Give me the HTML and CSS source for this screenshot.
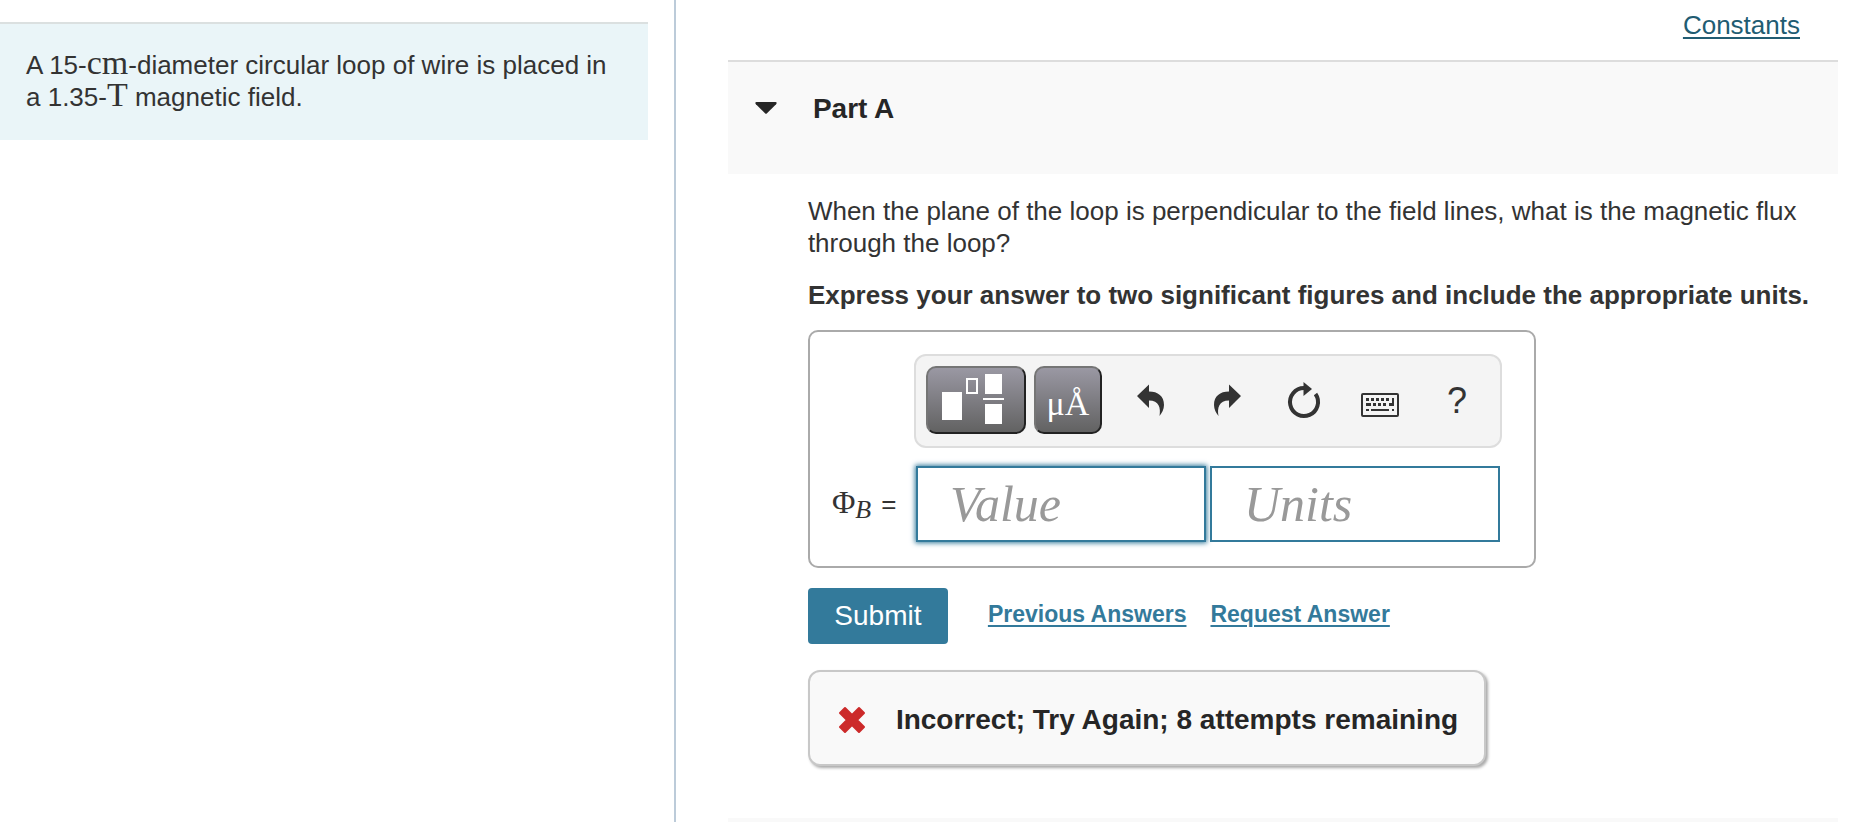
FILE: index.html
```html
<!DOCTYPE html>
<html lang="en">
<head>
    <meta charset="UTF-8">
    <title>Part A</title>
    <link rel="stylesheet" href="styles.css">
</head>
<body>
<div class="page">
    <aside class="problem-pane">
        <p class="intro">A 15-<span class="unit">cm</span>-diameter circular loop of wire is placed in a 1.35-<span class="unit">T</span> magnetic field.</p>
    </aside>

    <main class="work-pane">
        <div class="top-links">
            <a href="#constants">Constants</a>
        </div>

        <section>
            <header class="part-header">
                <svg class="caret" width="22" height="12" viewBox="0 0 22 12">
                    <path d="M1.5 0h19q2 0.4 0.6 2.2L12 11.3q-1 1-2 0L0.9 2.2Q-0.5 0.4 1.5 0z" fill="#262626"/>
                </svg>
                <h2>Part A</h2>
            </header>

            <div class="part-body">
                <p class="question">When the plane of the loop is perpendicular to the field lines, what is the magnetic flux through the loop?</p>
                <p class="instructions">Express your answer to two significant figures and include the appropriate units.</p>

                <form class="answer-form">
                    <div class="answer-box">
                        <div class="toolbar">
                            <button type="button" class="key key-wide" aria-label="Templates">
                                <svg width="62" height="50" viewBox="0 0 62 50" fill="#fff">
                                    <rect x="0" y="18" width="20" height="28"/>
                                    <rect x="25" y="5" width="10" height="14" fill="none" stroke="#fff" stroke-width="2"/>
                                    <rect x="43" y="0" width="17" height="20"/>
                                    <rect x="41" y="24" width="21" height="2"/>
                                    <rect x="43" y="30" width="17" height="20"/>
                                </svg>
                            </button>
                            <button type="button" class="key key-units">μÅ</button>
                            <div class="tools">
                                <button type="button" class="tool" aria-label="Undo">
                                    <svg width="38" height="38" viewBox="0 0 38 38" fill="#333">
                                        <path d="M5 14L17 2.5V9.5C26 9.5 32 14 32 23C32 27 30 31 27.5 34C29 26 27 18.5 17 18.5V26z"/>
                                    </svg>
                                </button>
                                <button type="button" class="tool" aria-label="Redo">
                                    <svg width="38" height="38" viewBox="0 0 38 38" fill="#333">
                                        <path d="M33 14L21 2.5V9.5C12 9.5 6 14 6 23C6 27 8 31 10.5 34C9 26 11 18.5 21 18.5V26z"/>
                                    </svg>
                                </button>
                                <button type="button" class="tool" aria-label="Reset">
                                    <svg width="38" height="38" viewBox="0 0 38 38">
                                        <path d="M19 6A14 14 0 1 0 30.5 12" fill="none" stroke="#333" stroke-width="4"/>
                                        <path d="M18.500 0L27 7L18.500 14z" fill="#333"/>
                                    </svg>
                                </button>
                                <button type="button" class="tool" aria-label="Keyboard">
                                    <svg width="38" height="38" viewBox="0 0 38 38" fill="#333">
                                        <rect x="1" y="12" width="36" height="22" rx="1" fill="none" stroke="#333" stroke-width="2"/>
                                        <path d="M5 16h3v3h-3zM10 16h3v3h-3zM15 16h3v3h-3zM20 16h3v3h-3zM25 16h3v3h-3z"/>
                                        <path d="M31 16h2v8h-5v-3h3zM5 21h5v3h-5zM12 21h3v3h-3zM17 21h3v3h-3zM22 21h3v3h-3z"/>
                                        <path d="M5 27h3v2h-3zM10 27h18v2h-18zM31 27h2v2h-2z"/>
                                    </svg>
                                </button>
                                <button type="button" class="tool tool-help" aria-label="Help">?</button>
                            </div>
                        </div>
                        <label class="answer-label" for="value"><span class="phi">Φ</span><span class="sub">B</span> <span>=</span></label>
                        <div class="fields">
                            <input class="field field-active" id="value" type="text" placeholder="Value">
                            <input class="field" id="units" type="text" placeholder="Units" aria-label="Units">
                        </div>
                    </div>

                    <div class="actions">
                        <button type="submit" class="submit">Submit</button>
                        <a href="#previous">Previous Answers</a>
                        <a href="#request">Request Answer</a>
                    </div>
                </form>

                <div class="feedback">
                    <svg width="28" height="28" viewBox="0 0 28 28">
                        <path d="M7 2L14 9L21 2L26 7L19 14L26 21L21 26L14 19L7 26L2 21L9 14L2 7z" fill="#cc2a2a" stroke="#cc2a2a" stroke-width="2" stroke-linejoin="round"/>
                    </svg>
                    <span>Incorrect; Try Again; 8 attempts remaining</span>
                </div>
            </div>
        </section>

        <section class="next-part"></section>
    </main>
</div>
</body>
</html>
```

FILE: styles.css
```css
* {
    box-sizing: border-box;
}

body {
    margin: 0;
    font-family: "Liberation Sans", Arial, sans-serif;
    font-size: 26px;
    line-height: 32px;
    color: #333;
    background: #fff;
}

p, h2 {
    margin: 0;
}

.page {
    display: grid;
    grid-template-columns: 36.3% minmax(0, 1fr);
    height: 100vh;
    overflow: hidden;
}

/* left side: problem statement */
.problem-pane {
    padding: 22px 26px 0 0;
    border-right: 2px solid #bccbd9;
}

.intro {
    padding: 25px 26px 27px;
    border-top: 2px solid #dbe0e0;
    background: #eaf5f8;
}

.unit {
    font-family: "Liberation Serif", "Times New Roman", serif;
    font-size: 34px;
    line-height: 26px;
}

/* right side: the parts */
.work-pane {
    padding: 0 24px 0 52px;
}

.top-links {
    padding: 9px 38px 19px 0;
    text-align: right;
}

.top-links a {
    color: #215c72;
    text-decoration-thickness: 2px;
    text-underline-offset: 3px;
}

.part-header {
    display: flex;
    gap: 36px;
    height: 114px;
    padding: 30px 27px;
    border-top: 2px solid #ddd;
    background: #f9f9f9;
}

.caret {
    margin-top: 10px;
}

.part-header h2 {
    font-size: 28px;
    line-height: 34px;
    color: #262626;
}

.part-body {
    padding: 21px 0 52px 80px;
}

.instructions {
    margin-top: 20px;
    font-weight: bold;
}

.answer-box {
    display: grid;
    grid-template-columns: auto minmax(0, 1fr);
    row-gap: 18px;
    max-width: 728px;
    margin-top: 19px;
    padding: 22px 32px 24px 22px;
    border: 2px solid #aaa;
    border-radius: 10px;
}

.toolbar {
    grid-column: 2;
    display: flex;
    gap: 8px;
    height: 94px;
    padding: 10px;
    border: 2px solid #ddd;
    border-radius: 12px;
    background: #f4f4f4;
}

.key {
    display: flex;
    align-items: center;
    justify-content: center;
    width: 68px;
    height: 68px;
    padding: 0;
    border: 2px solid;
    border-color: #757575 #222 #222 #757575;
    border-radius: 10px;
    background: linear-gradient(#9a98a3, #626262);
    color: #fff;
}

.key-wide {
    justify-content: flex-start;
    width: 100px;
    padding: 0 0 2px 14px;
}

.key-units {
    padding-top: 8px;
    font-family: "Liberation Serif", "Times New Roman", serif;
    font-size: 34px;
}

.tools {
    display: flex;
    flex: 1;
    align-items: center;
    justify-content: space-between;
    padding: 0 14px 0 22px;
}

.tool {
    width: 38px;
    height: 38px;
    padding: 0;
    border: 0;
    background: none;
    color: #333;
}

.tool svg {
    display: block;
}

.tool-help {
    font-family: "Liberation Sans", Arial, sans-serif;
    font-size: 36px;
    line-height: 38px;
}

.answer-label {
    display: flex;
    align-items: baseline;
    width: 82px;
    padding-top: 20px;
}

.phi, .sub {
    font-family: "Liberation Serif", "Times New Roman", serif;
    font-size: 32px;
    line-height: 32px;
}

.sub {
    margin-right: 10px;
    font-size: 26px;
    font-style: italic;
    transform: translateY(5px);
}

.fields {
    display: flex;
    gap: 4px;
    padding: 0 2px;
}

.field {
    flex: 1;
    min-width: 0;
    height: 76px;
    padding: 0 32px;
    border: 2px solid #337a9b;
    border-radius: 0;
    font-family: "Liberation Serif", "Times New Roman", serif;
    font-size: 50px;
    outline: none;
}

.field::placeholder {
    font-style: italic;
    color: #999;
}

.field-active {
    box-shadow: 0 0 5px 1px #337a9b;
}

.actions {
    display: flex;
    gap: 24px;
    margin-top: 20px;
}

.submit {
    width: 140px;
    height: 56px;
    margin-right: 16px;
    border: 0;
    border-radius: 4px;
    background: #337a9b;
    color: #fff;
    font-family: inherit;
    font-size: 28px;
}

.actions a {
    padding-top: 10px;
    font-size: 23px;
    font-weight: bold;
    color: #337a9b;
    text-decoration-thickness: 2px;
    text-underline-offset: 3px;
}

.feedback {
    display: inline-flex;
    align-items: center;
    gap: 30px;
    height: 96px;
    margin-top: 26px;
    padding: 3px 26px 0 28px;
    border: 2px solid #c8c8c8;
    border-radius: 12px;
    background: #f9f9f9;
    box-shadow: 2px 2px 3px #aaa;
    font-size: 28px;
    font-weight: bold;
    color: #262626;
}

.next-part {
    height: 114px;
    background: #f9f9f9;
}
```
